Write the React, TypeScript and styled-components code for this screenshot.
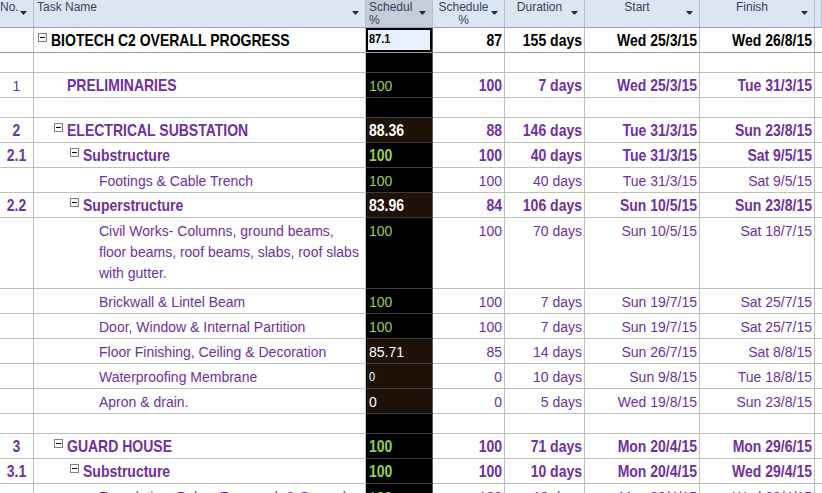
import styled, { createGlobalStyle } from "styled-components";

const GlobalStyle = createGlobalStyle`
  body {
    margin: 0;
    background: #fff;
    font-family: "Liberation Sans", Arial, sans-serif;
  }
  #root {
    width: 822px;
    height: 493px;
    overflow: hidden;
  }
`;

const COLS = "34px 332px 67px 72px 80px 115px 115px 1fr";
const PURPLE = "#7030a0";
const GREEN = "#92d050";

const Sheet = styled.div`
  width: 822px;
  height: 493px;
  overflow: hidden;
  background: #fff;
  color: ${PURPLE};
`;

const HeaderRow = styled.div`
  display: grid;
  grid-template-columns: ${COLS};
  height: 28px;
  box-sizing: border-box;
  background: #dce6f2;
  border-bottom: 1px solid #8fa3ba;
`;

const HeadCell = styled.div<{ $selected?: boolean; $padLeft?: number }>`
  display: flex;
  align-items: flex-start;
  box-sizing: border-box;
  min-width: 0;
  overflow: hidden;
  padding: 1px 6px 0 ${(p) => p.$padLeft ?? 3}px;
  border-right: 1px solid #b3c2d3;
  background: ${(p) => (p.$selected ? "#c4cdd8" : "transparent")};
`;

const HeadLabel = styled.div<{ $align?: "left" | "center" }>`
  flex: 1;
  min-width: 0;
  font-size: 12px;
  line-height: 13px;
  color: #34435f;
  white-space: nowrap;
  text-align: ${(p) => p.$align ?? "left"};
`;

const ArrowSvg = styled.svg`
  flex-shrink: 0;
  margin-top: 10px;
`;

const DropArrow = () => (
  <ArrowSvg width="7" height="4" viewBox="0 0 7 4">
    <path d="M0 0 H7 L3.5 4 Z" fill="#1b2a48" />
  </ArrowSvg>
);

const FilterGlyph = styled.svg`
  margin: 2px 0 0 1px;
`;

const Row = styled.div<{ $h: number }>`
  display: grid;
  grid-template-columns: ${COLS};
  height: ${(p) => p.$h}px;
`;

const Cell = styled.div<{ $line?: string }>`
  box-sizing: border-box;
  min-width: 0;
  overflow: hidden;
  white-space: nowrap;
  padding-top: 3px;
  border-right: 1px solid #c0c0c0;
  border-bottom: 1px solid ${(p) => p.$line ?? "#c0c0c0"};
`;

const IdCell = styled(Cell)`
  text-align: center;
`;

const TaskCell = styled(Cell)<{ $indent: number }>`
  display: flex;
  align-items: flex-start;
  padding-left: ${(p) => p.$indent}px;
`;

const TaskLines = styled.div`
  display: flex;
  flex-direction: column;
`;

const MetricCell = styled(Cell)<{ $bg: string; $selected?: boolean }>`
  padding-left: 3px;
  padding-top: ${(p) => (p.$selected ? 1 : 3)}px;
  background: ${(p) => p.$bg};
  border-right: 1px solid #5a5a5a;
  border-bottom-color: ${(p) => (p.$selected ? "#a0a0a0" : "#3c3c3c")};
  box-shadow: ${(p) => (p.$selected ? "inset 0 0 0 2px #000" : "none")};
`;

const ValueCell = styled(Cell)`
  text-align: right;
  padding-right: 2px;
`;

const FillCell = styled(Cell)`
  border-right: none;
`;

const Toggle = styled.span`
  position: relative;
  flex-shrink: 0;
  box-sizing: border-box;
  width: 9px;
  height: 9px;
  margin: 2px 4px 0 0;
  border: 1px solid #808080;
  background: #fff;
  &::after {
    content: "";
    position: absolute;
    left: 1px;
    top: 3px;
    width: 5px;
    height: 1px;
    background: #000;
  }
`;

const Txt = styled.span<{ $bold?: boolean; $color?: string; $size?: number }>`
  display: inline-block;
  font-size: ${(p) => p.$size ?? 14}px;
  line-height: ${(p) => ((p.$size ?? 14) >= 14 ? 21 : 14)}px;
  font-weight: ${(p) => (p.$bold ? 700 : 400)};
  color: ${(p) => p.$color ?? "inherit"};
  transform: scaleY(${(p) => (p.$bold ? 1.2 : 1.1)});
  transform-origin: 50% 72%;
`;

type Task = {
  h?: number;
  id?: string;
  idBold?: boolean;
  name?: string[];
  level?: number;
  toggle?: boolean;
  bold?: boolean;
  top?: boolean;
  metric?: string;
  metricBold?: boolean;
  metricSize?: number;
  pct?: string;
  dur?: string;
  start?: string;
  finish?: string;
};

const tasks: Task[] = [
  {
    top: true, name: ["BIOTECH C2 OVERALL PROGRESS"], level: 0, toggle: true, bold: true,
    metric: "87.1", metricBold: true, metricSize: 11,
    pct: "87", dur: "155 days", start: "Wed 25/3/15", finish: "Wed 26/8/15",
  },
  { h: 20 },
  {
    id: "1", name: ["PRELIMINARIES"], level: 1, bold: true,
    metric: "100", pct: "100", dur: "7 days", start: "Wed 25/3/15", finish: "Tue 31/3/15",
  },
  { h: 20 },
  {
    id: "2", idBold: true, name: ["ELECTRICAL SUBSTATION"], level: 1, toggle: true, bold: true,
    metric: "88.36", metricBold: true,
    pct: "88", dur: "146 days", start: "Tue 31/3/15", finish: "Sun 23/8/15",
  },
  {
    id: "2.1", idBold: true, name: ["Substructure"], level: 2, toggle: true, bold: true,
    metric: "100", metricBold: true,
    pct: "100", dur: "40 days", start: "Tue 31/3/15", finish: "Sat 9/5/15",
  },
  {
    name: ["Footings & Cable Trench"], level: 3,
    metric: "100", pct: "100", dur: "40 days", start: "Tue 31/3/15", finish: "Sat 9/5/15",
  },
  {
    id: "2.2", idBold: true, name: ["Superstructure"], level: 2, toggle: true, bold: true,
    metric: "83.96", metricBold: true,
    pct: "84", dur: "106 days", start: "Sun 10/5/15", finish: "Sun 23/8/15",
  },
  {
    h: 71, level: 3,
    name: [
      "Civil Works- Columns, ground beams,",
      "floor beams, roof beams, slabs, roof slabs",
      "with gutter.",
    ],
    metric: "100", pct: "100", dur: "70 days", start: "Sun 10/5/15", finish: "Sat 18/7/15",
  },
  {
    name: ["Brickwall & Lintel Beam"], level: 3,
    metric: "100", pct: "100", dur: "7 days", start: "Sun 19/7/15", finish: "Sat 25/7/15",
  },
  {
    name: ["Door, Window & Internal Partition"], level: 3,
    metric: "100", pct: "100", dur: "7 days", start: "Sun 19/7/15", finish: "Sat 25/7/15",
  },
  {
    name: ["Floor Finishing, Ceiling & Decoration"], level: 3,
    metric: "85.71", pct: "85", dur: "14 days", start: "Sun 26/7/15", finish: "Sat 8/8/15",
  },
  {
    name: ["Waterproofing Membrane"], level: 3,
    metric: "0", metricSize: 11, pct: "0", dur: "10 days", start: "Sun 9/8/15", finish: "Tue 18/8/15",
  },
  {
    name: ["Apron & drain."], level: 3,
    metric: "0", pct: "0", dur: "5 days", start: "Wed 19/8/15", finish: "Sun 23/8/15",
  },
  { h: 20 },
  {
    id: "3", idBold: true, name: ["GUARD HOUSE"], level: 1, toggle: true, bold: true,
    metric: "100", metricBold: true,
    pct: "100", dur: "71 days", start: "Mon 20/4/15", finish: "Mon 29/6/15",
  },
  {
    id: "3.1", idBold: true, name: ["Substructure"], level: 2, toggle: true, bold: true,
    metric: "100", metricBold: true,
    pct: "100", dur: "10 days", start: "Mon 20/4/15", finish: "Wed 29/4/15",
  },
  {
    name: ["Foundation, Poles, Formwork & Ground"], level: 3,
    metric: "100", pct: "100", dur: "10 days", start: "Mon 20/4/15", finish: "Wed 29/4/15",
  },
];

const headers = [
  { label: "Schedule", sub: "%", align: "center" as const },
  { label: "Duration", align: "center" as const },
  { label: "Start", align: "center" as const },
  { label: "Finish", align: "center" as const },
];

const TaskRow = ({ t }: { t: Task }) => {
  const line = t.top ? "#a0a0a0" : undefined;
  const color = t.top ? "#000" : undefined;
  const level = t.level ?? 0;
  const indent = 4 + level * 16 + (t.toggle ? 0 : 13);

  let metricColor = "#fff";
  let metricBg = "#000";
  if (t.top) {
    metricColor = "#000";
    metricBg = "#e8f1fd";
  } else if (t.metric === "100") {
    metricColor = GREEN;
  } else if (t.metric !== undefined) {
    metricBg = "#1e1207";
  }

  return (
    <Row $h={t.h ?? 25}>
      <IdCell $line={line}>
        {t.id && <Txt $bold={t.idBold}>{t.id}</Txt>}
      </IdCell>
      <TaskCell $line={line} $indent={indent}>
        {t.toggle && <Toggle />}
        {t.name && (
          <TaskLines>
            {t.name.map((n) => (
              <Txt key={n} $bold={t.bold} $color={color}>
                {n}
              </Txt>
            ))}
          </TaskLines>
        )}
      </TaskCell>
      <MetricCell $bg={metricBg} $selected={t.top}>
        {t.metric && (
          <Txt $bold={t.metricBold} $color={metricColor} $size={t.metricSize}>
            {t.metric}
          </Txt>
        )}
      </MetricCell>
      {[t.pct, t.dur, t.start, t.finish].map((v, i) => (
        <ValueCell key={i} $line={line}>
          {v && (
            <Txt $bold={t.bold} $color={color}>
              {v}
            </Txt>
          )}
        </ValueCell>
      ))}
      <FillCell $line={line} />
    </Row>
  );
};

export default function App() {
  return (
    <>
      <GlobalStyle />
      <Sheet>
        <HeaderRow>
          <HeadCell $padLeft={0}>
            <HeadLabel>No.</HeadLabel>
            <DropArrow />
          </HeadCell>
          <HeadCell>
            <HeadLabel>Task Name</HeadLabel>
            <DropArrow />
          </HeadCell>
          <HeadCell $selected>
            <HeadLabel>
              Schedul
              <br />%
            </HeadLabel>
            <DropArrow />
          </HeadCell>
          {headers.map((h) => (
            <HeadCell key={h.label}>
              <HeadLabel $align={h.align}>
                {h.label}
                {h.sub && (
                  <>
                    <br />
                    {h.sub}
                  </>
                )}
              </HeadLabel>
              <DropArrow />
            </HeadCell>
          ))}
          <HeadCell $padLeft={0}>
            <FilterGlyph width="7" height="9" viewBox="0 0 7 9">
              <path d="M0 0.5 H7 M0.5 3 H6.5 L3.5 8 Z" stroke="#1b2a48" fill="none" strokeWidth="1" />
            </FilterGlyph>
          </HeadCell>
        </HeaderRow>
        {tasks.map((t, i) => (
          <TaskRow key={i} t={t} />
        ))}
      </Sheet>
    </>
  );
}
